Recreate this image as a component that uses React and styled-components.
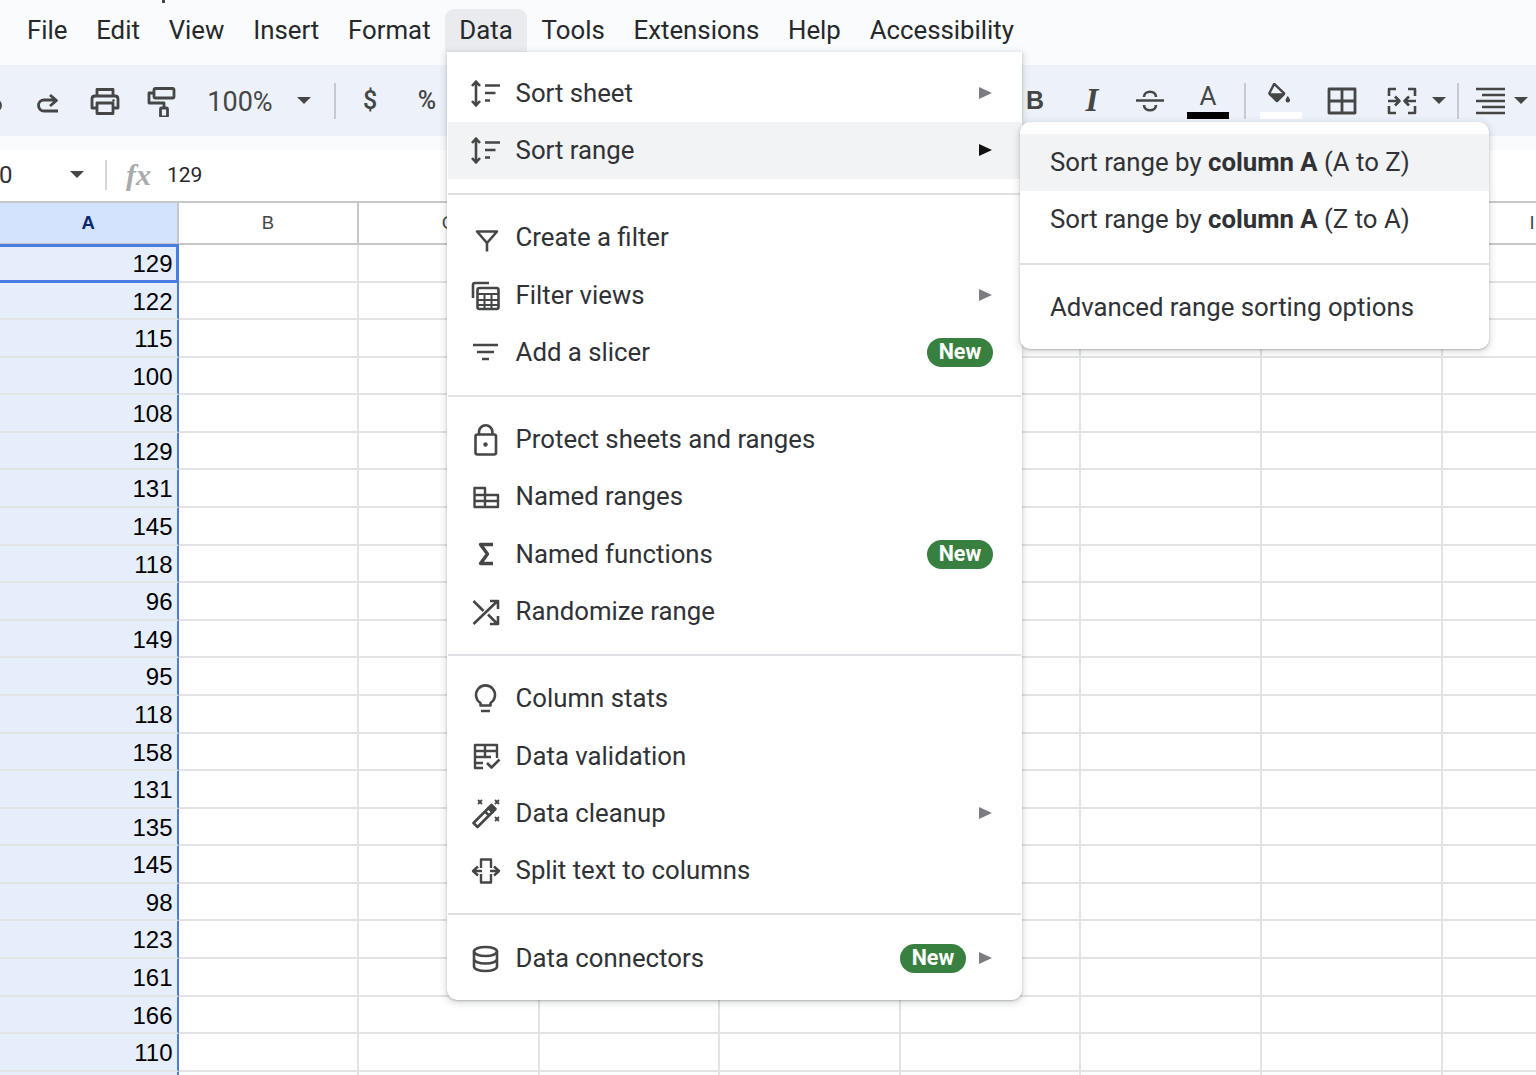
import React from 'react'
import styled, { createGlobalStyle } from 'styled-components'

const GlobalStyle = createGlobalStyle`
  html, body { margin: 0; padding: 0; background: #fff; }
  body { font-family: Roboto, "Liberation Sans", sans-serif; color: #1f1f1f; }
`

const Page = styled.div`
  position: relative;
  width: 1536px;
  height: 1075px;
  overflow: hidden;
  background: #fff;
`

const MenuBar = styled.div`
  position: relative;
  display: flex;
  height: 65px;
  padding: 9px 0 0 12.5px;
  box-sizing: border-box;
  background: #f9fbfd;
`

const TitleTail = styled.div`
  position: absolute;
  left: 162px;
  top: 0;
  width: 3px;
  height: 3px;
  background: #444746;
`

const MenuTab = styled.div`
  height: 43px;
  line-height: 42px;
  padding: 0 14.4px;
  font-size: 25.8px;
  color: #26282a;
  border-radius: 9px 9px 0 0;
  background: ${p => (p.$active ? '#e9ebee' : 'transparent')};
`

const Toolbar = styled.div`
  height: 71px;
  background: #edf2fa;
  overflow: hidden;
`

const ToolRow = styled.div`
  display: flex;
  align-items: center;
  height: 71px;
  margin-left: -38px;
  color: #444746;
`

const Tool = styled.div`
  flex: none;
  display: flex;
  align-items: center;
  justify-content: center;
  width: ${p => p.$w}px;
  height: 36px;
`

const ToolSep = styled.div`
  width: 2px;
  height: 36px;
  background: #c7c9cc;
`

const Caret = styled.div`
  width: 0;
  height: 0;
  border-left: 7px solid transparent;
  border-right: 7px solid transparent;
  border-top: 7px solid #444746;
`

const ToolText = styled.span`
  font-family: ${p => p.$font || 'Roboto, sans-serif'};
  font-size: ${p => p.$size || 25}px;
  font-weight: ${p => p.$weight || 400};
  font-style: ${p => (p.$italic ? 'italic' : 'normal')};
  padding-top: ${p => p.$drop || 0}px;
  color: #444746;
`

const ColorTool = styled.div`
  display: flex;
  flex-direction: column;
  align-items: center;
  justify-content: flex-end;
  width: 42px;
  height: 36px;
`

const ColorBar = styled.div`
  flex: none;
  width: 100%;
  height: 7px;
  margin-top: ${p => p.$gap || 0}px;
  background: ${p => p.$color};
`

const Gutter = styled.div`
  height: 14px;
  background: #f9fbfd;
`

const FormulaBar = styled.div`
  display: flex;
  align-items: center;
  height: 51px;
  padding-bottom: 2px;
  box-sizing: border-box;
  background: #fff;
`

const NameBox = styled.div`
  display: flex;
  align-items: center;
  justify-content: space-between;
  box-sizing: border-box;
  width: 105px;
  padding-right: 21px;
  font-size: 24px;
  color: #303134;
  span { margin-left: -1px; }
`

const FormulaSep = styled.div`
  width: 2px;
  height: 30px;
  background: #d5d6d8;
`

const Fx = styled.span`
  margin-left: 19px;
  width: 41px;
  font-family: "Liberation Serif", serif;
  font-style: italic;
  font-weight: 700;
  font-size: 30px;
  color: #a9abae;
`

const FormulaValue = styled.span`
  font-size: 21px;
  color: #26282a;
`

const Sheet = styled.div`
  display: grid;
  grid-template-columns: 178.5px repeat(8, 180.6px);
  grid-template-rows: 42px;
  grid-auto-rows: 37.58px;
  border-top: 2px solid #c7c7c7;
`

const HeadCell = styled.div`
  line-height: 39px;
  text-align: center;
  box-sizing: border-box;
  border-right: 2px solid #c7c7c7;
  border-bottom: 2px solid #c7c7c7;
  font-family: "Liberation Sans", Arial, sans-serif;
  font-size: 18.5px;
  font-weight: ${p => (p.$selected ? 700 : 400)};
  color: ${p => (p.$selected ? '#0b2a6b' : '#444746')};
  background: ${p => (p.$selected ? '#d3e3fd' : '#fff')};
`

const Cell = styled.div`
  position: relative;
  box-sizing: border-box;
  padding-right: 4px;
  line-height: 37px;
  text-align: right;
  font-family: "Liberation Sans", Arial, sans-serif;
  font-size: 24px;
  color: #000;
  border-bottom: 2px solid #e2e3e3;
  border-right: 2px solid ${p => (p.$selected ? '#4a7de2' : '#e2e3e3')};
  background: ${p => (p.$selected ? '#e7eefb' : '#fff')};
`

const ActiveCell = styled.div`
  position: absolute;
  inset: -1px -2px -2px 0;
  border: 3px solid #4a7de2;
  border-left: none;
`

const Dropdown = styled.div`
  position: absolute;
  left: 447px;
  top: 52px;
  box-sizing: border-box;
  width: 575px;
  height: 948px;
  padding: 12.5px 1px;
  background: #fff;
  border-radius: 0 0 10px 10px;
  box-shadow: 0 2px 6px 2px rgba(60, 64, 67, 0.15), 0 1px 2px rgba(60, 64, 67, 0.3);
`

const SubMenu = styled.div`
  position: absolute;
  left: 1020px;
  top: 122px;
  box-sizing: border-box;
  width: 469px;
  height: 227px;
  padding-top: 12px;
  background: #fff;
  border-radius: 10px;
  box-shadow: 0 2px 6px 2px rgba(60, 64, 67, 0.15), 0 1px 2px rgba(60, 64, 67, 0.3);
`

const Row = styled.div`
  display: flex;
  align-items: center;
  box-sizing: border-box;
  height: 57.3px;
  padding: 0 28px 0 22px;
  font-size: 25.75px;
  color: #303236;
  background: ${p => (p.$hover ? '#f1f3f4' : 'transparent')};
`

const SubRow = styled(Row)`
  padding: 0 30px 1px;
  white-space: pre;
  b { font-weight: 700; }
`

const IconSlot = styled.div`
  flex: none;
  width: 32px;
  height: 32px;
  margin-right: 13.6px;
  svg { display: block; overflow: visible; }
`

const RowLabel = styled.span`
  flex: 1;
  padding-bottom: 1px;
`

const Badge = styled.span`
  width: 66px;
  height: 29px;
  line-height: 28px;
  text-align: center;
  border-radius: 15px;
  font-size: 21.5px;
  font-weight: 700;
  color: #fff;
  background: #388040;
`

const Arrow = styled.span`
  width: 0;
  height: 0;
  margin: 0 1px 0 ${p => (p.$after ? 13 : 0)}px;
  border-top: 6px solid transparent;
  border-bottom: 6px solid transparent;
  border-left: 13px solid ${p => (p.$dark ? '#111' : '#7b7d80')};
`

const MenuLine = styled.div`
  margin: 14px 0;
  height: 2px;
  background: #e0e1e5;
`

const Svg = ({ children }) => (
  <svg width="32" height="32" viewBox="0 0 32 32" fill="none" stroke="#444746" strokeWidth="2.6" strokeLinejoin="round">
    {children}
  </svg>
)

const icons = {
  sort: (
    <Svg>
      <path d="M6 5v23M2 9l4-4.500 4 4.500M2 24l4 4.500 4-4.500M15 8.500h15M15 16h10.500M15 23.500h5" />
    </Svg>
  ),
  filter: (
    <Svg>
      <path d="M7 9.500h20L17 21zM17 21v8.500" />
    </Svg>
  ),
  filterViews: (
    <Svg>
      <path d="M3 19V6q0-2 2-2h14" />
      <rect x="7.500" y="9" width="21" height="21" rx="2" />
      <path d="M8 15h20M8 21h20M8 26h20M14.500 15v15M21.500 15v15" strokeWidth="2" />
    </Svg>
  ),
  slicer: (
    <Svg>
      <path d="M3 9h25M7 16h17M12 23h7" />
    </Svg>
  ),
  lock: (
    <Svg>
      <rect x="5.500" y="10.500" width="20.500" height="20" rx="2" />
      <path d="M9 10V8a6.700 6.700 0 0 1 13.400 0v2" />
      <circle cx="15.500" cy="20.500" r="2.200" fill="#444746" stroke="none" />
    </Svg>
  ),
  namedRanges: (
    <Svg>
      <path d="M4.500 7h10.500v7h13v12H4.500zM4.500 14H15M4.500 20h23M15 14v12" strokeWidth="2.400" />
    </Svg>
  ),
  sigma: (
    <Svg>
      <path d="M23 6.500H10.500l7 9.500-7 9.500H23" strokeWidth="3.400" />
    </Svg>
  ),
  shuffle: (
    <Svg>
      <path d="M3.500 5l10 10M18 18.500l9.500 9.500M3.500 28L27.500 5M20 5h8v8M28 20v8h-8" />
    </Svg>
  ),
  bulb: (
    <Svg>
      <path d="M10.500 22.500v-2.500a9.500 9.500 0 1 1 10 0v2.500zM11 28h9" />
    </Svg>
  ),
  validation: (
    <Svg>
      <path d="M13 28H5V5h22v13M5 11h22M5 17h16M5 23h8M15 5v12" strokeWidth="2.400" />
      <path d="M17 23l4.500 4.500 8-8" />
    </Svg>
  ),
  wand: (
    <Svg>
      <path d="M3.500 26l15-15 4 4-15 15zM15 14.500l4 4" />
      <path d="M18.500 11l3-3 4 4-3 3z" fill="#444746" />
      <path d="M8 3l4 4M12 3L8 7M25 3l4 4M29 3l-4 4M25 20l4 4M29 20l-4 4" strokeWidth="1.800" />
    </Svg>
  ),
  split: (
    <Svg>
      <path d="M11 13V4.500h10V13M11 19v8.500h10V19M3 16h9M8 11.500L3 16l5 4.500M20 16h9M24 11.500l5 4.500-5 4.500" strokeWidth="2.400" />
    </Svg>
  ),
  database: (
    <Svg>
      <ellipse cx="15.500" cy="9.500" rx="11.500" ry="4.500" />
      <path d="M4 9.500v15c0 2.500 5 4.500 11.500 4.500S27 27 27 24.500v-15M4 17c0 2.500 5 4.500 11.500 4.500S27 19.500 27 17" />
    </Svg>
  ),
  undo: (
    <Svg>
      <path d="M7 26h14a5.500 5.500 0 0 0 0-11H9M15 10l-6.500 5.500L15 21" strokeWidth="2.800" />
    </Svg>
  ),
  redo: (
    <Svg>
      <path d="M27 26H13a5.500 5.500 0 0 1 0-11h12M19 10l6.500 5.500L19 21" strokeWidth="2.800" />
    </Svg>
  ),
  print: (
    <Svg>
      <path d="M8 11V4.500h16V11M8 23H3V14q0-3 3-3h20q3 0 3 3v9h-5" strokeWidth="2.800" />
      <path d="M8 18h16v10.500H8z" strokeWidth="2.800" />
      <circle cx="24.500" cy="15.500" r="1.300" fill="#444746" stroke="none" />
    </Svg>
  ),
  paint: (
    <Svg>
      <rect x="8" y="3.500" width="20" height="9.500" rx="1.500" strokeWidth="2.800" />
      <path d="M8 8H3v10h15v5" strokeWidth="2.800" />
      <rect x="14.500" y="23" width="7" height="9" rx="1" strokeWidth="2.800" />
    </Svg>
  ),
  strike: (
    <Svg>
      <path d="M2 15.500h28M10 12c0-7 12-7 12 0M10 20c0 7 12 7 12 0" strokeWidth="2.600" />
    </Svg>
  ),
  fill: (
    <Svg>
      <path d="M8.500 1l11 10.500-8 8-8.500-8z" />
      <path d="M4 12.500h15l-7.500 7.500z" fill="#444746" />
      <path d="M23.500 14c-1 2-2.500 3.500-2.500 5a2.500 2.500 0 0 0 5 0c0-1.500-1.500-3-2.500-5z" fill="#444746" stroke="none" />
    </Svg>
  ),
  borders: (
    <Svg>
      <path d="M3 4h26v24H3zM16 4v24M3 16h26" strokeWidth="2.800" />
    </Svg>
  ),
  merge: (
    <Svg>
      <path d="M10 4H3v7M22 4h7v7M10 28H3v-7M22 28h7v-7M2 16h11M9 11.500l4.500 4.500L9 20.500M30 16H19M23 11.500L18.500 16l4.500 4.500" />
    </Svg>
  ),
  align: (
    <Svg>
      <path d="M2 4h29M8 10h23M2 16h29M8 22h23M2 28h29" />
    </Svg>
  ),
}

const tabs = ['File', 'Edit', 'View', 'Insert', 'Format', 'Data', 'Tools', 'Extensions', 'Help', 'Accessibility']

const menuGroups = [
  [
    { icon: 'sort', label: 'Sort sheet', arrow: true },
    { icon: 'sort', label: 'Sort range', arrow: true, hover: true },
  ],
  [
    { icon: 'filter', label: 'Create a filter' },
    { icon: 'filterViews', label: 'Filter views', arrow: true },
    { icon: 'slicer', label: 'Add a slicer', badge: true },
  ],
  [
    { icon: 'lock', label: 'Protect sheets and ranges' },
    { icon: 'namedRanges', label: 'Named ranges' },
    { icon: 'sigma', label: 'Named functions', badge: true },
    { icon: 'shuffle', label: 'Randomize range' },
  ],
  [
    { icon: 'bulb', label: 'Column stats' },
    { icon: 'validation', label: 'Data validation' },
    { icon: 'wand', label: 'Data cleanup', arrow: true },
    { icon: 'split', label: 'Split text to columns' },
  ],
  [{ icon: 'database', label: 'Data connectors', badge: true, arrow: true }],
]

const columns = ['A', 'B', 'C', 'D', 'E', 'F', 'G', 'H', 'I']
// D to H sit fully behind the open menus
const coveredHeads = ['D', 'E', 'F', 'G', 'H']
const values = [129, 122, 115, 100, 108, 129, 131, 145, 118, 96, 149, 95, 118, 158, 131, 135, 145, 98, 123, 161, 166, 110, '']

export default function App() {
  return (
    <Page>
      <GlobalStyle />
      <MenuBar>
        <TitleTail />
        {tabs.map(t => (
          <MenuTab key={t} $active={t === 'Data'}>{t}</MenuTab>
        ))}
      </MenuBar>

      <Toolbar>
        <ToolRow>
          <Tool $w={56}>{icons.undo}</Tool>
          <Tool $w={58}>{icons.redo}</Tool>
          <Tool $w={58}>{icons.print}</Tool>
          <Tool $w={56}>{icons.paint}</Tool>
          <Tool $w={100}><ToolText $size={27} $drop={3}>100%</ToolText></Tool>
          <Tool $w={28}><Caret /></Tool>
          <Tool $w={34}><ToolSep /></Tool>
          <Tool $w={36}><ToolText $size={25} $weight={500}>$</ToolText></Tool>
          <Tool $w={78}><ToolText $size={25} $weight={500}>%</ToolText></Tool>
          <Tool $w={542} />
          <Tool $w={54}><ToolText $font='"Liberation Sans", sans-serif' $weight={700} $size={25}>B</ToolText></Tool>
          <Tool $w={60}><ToolText $font='"Liberation Serif", serif' $weight={700} $italic $size={33}>I</ToolText></Tool>
          <Tool $w={56}>{icons.strike}</Tool>
          <Tool $w={60}>
            <ColorTool>
              <ToolText $size={26}>A</ToolText>
              <ColorBar $color="#000" $gap={1} />
            </ColorTool>
          </Tool>
          <Tool $w={14}><ToolSep /></Tool>
          <Tool $w={58}>
            <ColorTool>
              {icons.fill}
              <ColorBar $color="#fff" />
            </ColorTool>
          </Tool>
          <Tool $w={64}>{icons.borders}</Tool>
          <Tool $w={56}>{icons.merge}</Tool>
          <Tool $w={18}><Caret /></Tool>
          <Tool $w={20}><ToolSep /></Tool>
          <Tool $w={44}>{icons.align}</Tool>
          <Tool $w={18}><Caret /></Tool>
        </ToolRow>
      </Toolbar>

      <Gutter />

      <FormulaBar>
        <NameBox>
          <span>0</span>
          <Caret />
        </NameBox>
        <FormulaSep />
        <Fx>fx</Fx>
        <FormulaValue>129</FormulaValue>
      </FormulaBar>

      <Sheet>
        {columns.map(c => (
          <HeadCell key={c} $selected={c === 'A'}>{coveredHeads.includes(c) ? '' : c}</HeadCell>
        ))}
        {values.map((v, i) =>
          columns.map(c => (
            <Cell key={`${c}${i}`} $selected={c === 'A'}>
              {c === 'A' ? v : ''}
              {c === 'A' && i === 0 && <ActiveCell />}
            </Cell>
          ))
        )}
      </Sheet>

      <Dropdown>
        {menuGroups.map((group, g) => (
          <React.Fragment key={g}>
            {g > 0 && <MenuLine />}
            {group.map(item => (
              <Row key={item.label} $hover={item.hover}>
                <IconSlot>{icons[item.icon]}</IconSlot>
                <RowLabel>{item.label}</RowLabel>
                {item.badge && <Badge>New</Badge>}
                {item.arrow && <Arrow $after={item.badge} $dark={item.hover} />}
              </Row>
            ))}
          </React.Fragment>
        ))}
      </Dropdown>

      <SubMenu>
        <SubRow $hover>Sort range by <b>column A</b> (A to Z)</SubRow>
        <SubRow>Sort range by <b>column A</b> (Z to A)</SubRow>
        <MenuLine />
        <SubRow>Advanced range sorting options</SubRow>
      </SubMenu>
    </Page>
  )
}
